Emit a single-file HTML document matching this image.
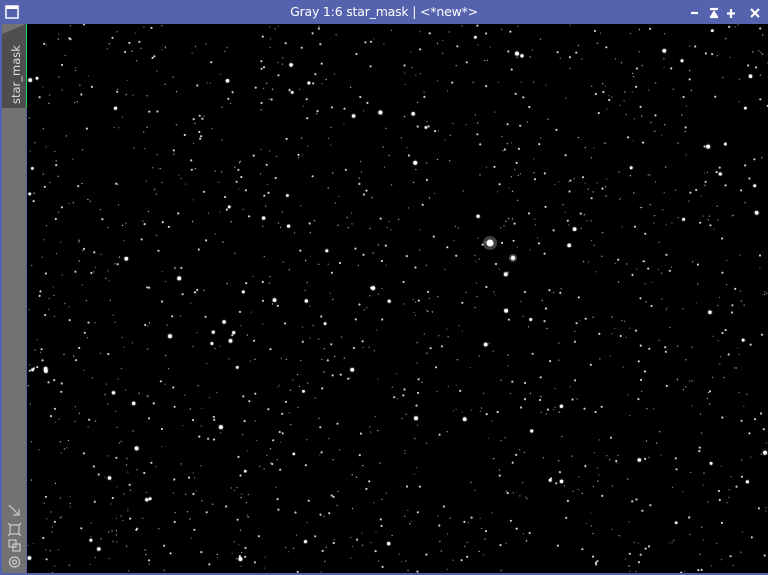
<!DOCTYPE html>
<html><head><meta charset="utf-8">
<style>
html,body{margin:0;padding:0;width:768px;height:575px;overflow:hidden;background:#5462ad;font-family:"DejaVu Sans","Liberation Sans",sans-serif}
#title{position:absolute;left:0;top:0;width:768px;height:24px;background:#5563ae;color:#fff;font-size:12.5px;text-align:center;line-height:24px;letter-spacing:-0.2px}
#side{position:absolute;left:2px;top:24px;width:24px;height:549px;background:#727272}
#tab{position:absolute;left:2px;top:24px;width:24px;height:84px;background:#4e4e4e;clip-path:polygon(0 10px,24px 0,24px 84px,0 84px)}
#tabtxt{position:absolute;left:9px;top:104px;transform-origin:0 0;transform:rotate(-90deg);color:#ddd;font-size:11.5px;white-space:nowrap}
#green{position:absolute;left:26px;top:24px;width:1px;height:84px;background:#1fd05a}
#sky{position:absolute;left:27px;top:24px;width:741px;height:549px;background:#000}
#bot{position:absolute;left:0;top:573px;width:768px;height:2px;background:#5462ad}
</style></head><body>
<div id="title">Gray 1:6 star_mask | &lt;*new*&gt;</div>
<svg style="position:absolute;left:5px;top:5px" width="14" height="14"><rect x="1" y="1" width="12" height="12" fill="none" stroke="#fff" stroke-width="1.5"/><rect x="1" y="1" width="12" height="3" fill="#fff"/></svg>
<svg style="position:absolute;left:688px;top:6px" width="76" height="14" stroke="#fff" stroke-width="2.2" fill="none">
<line x1="3" y1="7" x2="10" y2="7"/>
<line x1="22" y1="3" x2="30" y2="3"/><line x1="22" y1="11" x2="30" y2="11"/><path d="M23 10 L26 5 L29 10 Z" fill="#fff" stroke-width="1"/>
<line x1="43" y1="3" x2="43" y2="12"/><line x1="39" y1="7.5" x2="47" y2="7.5"/>
<line x1="63" y1="3" x2="71" y2="11"/><line x1="71" y1="3" x2="63" y2="11"/>
</svg>
<div id="side"></div>
<div id="tab"></div>
<div id="tabtxt">star_mask</div>
<div id="green"></div>
<svg id="sky" width="741" height="549"><g id="stars" fill="#fff"></g>
<circle cx="463" cy="219" r="7" fill="#fff" opacity=".25"/><circle cx="463" cy="219" r="3.5" fill="#fff"/>
<circle cx="486" cy="234" r="4" fill="#fff" opacity=".3"/><circle cx="486" cy="234" r="2.2" fill="#fff"/>
</svg>
<svg style="position:absolute;left:7px;top:503px" width="16" height="68" stroke="#ccc" stroke-width="1.2" fill="none">
<path d="M2 2 L12 12 M6 12 H12 V6"/>
<rect x="3" y="22" width="9" height="9"/><path d="M1 20 L4 23 M14 20 L11 23 M1 33 L4 30 M14 33 L11 30"/>
<rect x="2" y="37" width="7" height="7"/><rect x="6" y="41" width="7" height="7"/>
<circle cx="7.5" cy="59" r="5"/><circle cx="7.5" cy="59" r="2"/>
</svg>
<div id="bot"></div>
<script>
var s=12345;function r(){s=(s*1103515245+12345)%2147483648;return s/2147483648}
var g=document.getElementById('stars'),h='';
for(var i=0;i<1600;i++){var x=r()*741,y=r()*549,q=r();
if(q<0.65){h+='<circle cx="'+x.toFixed(1)+'" cy="'+y.toFixed(1)+'" r="0.7" opacity="'+(0.3+r()*0.4).toFixed(2)+'"/>';}
else if(q<0.95){h+='<circle cx="'+x.toFixed(1)+'" cy="'+y.toFixed(1)+'" r="1.1" opacity="0.8"/>';}
else{var rr=1.3+r()*0.8;h+='<circle cx="'+x.toFixed(1)+'" cy="'+y.toFixed(1)+'" r="'+(rr*1.6).toFixed(1)+'" opacity="0.15"/><circle cx="'+x.toFixed(1)+'" cy="'+y.toFixed(1)+'" r="'+rr.toFixed(1)+'"/>';}}
g.innerHTML=h;
</script>
</body></html>
